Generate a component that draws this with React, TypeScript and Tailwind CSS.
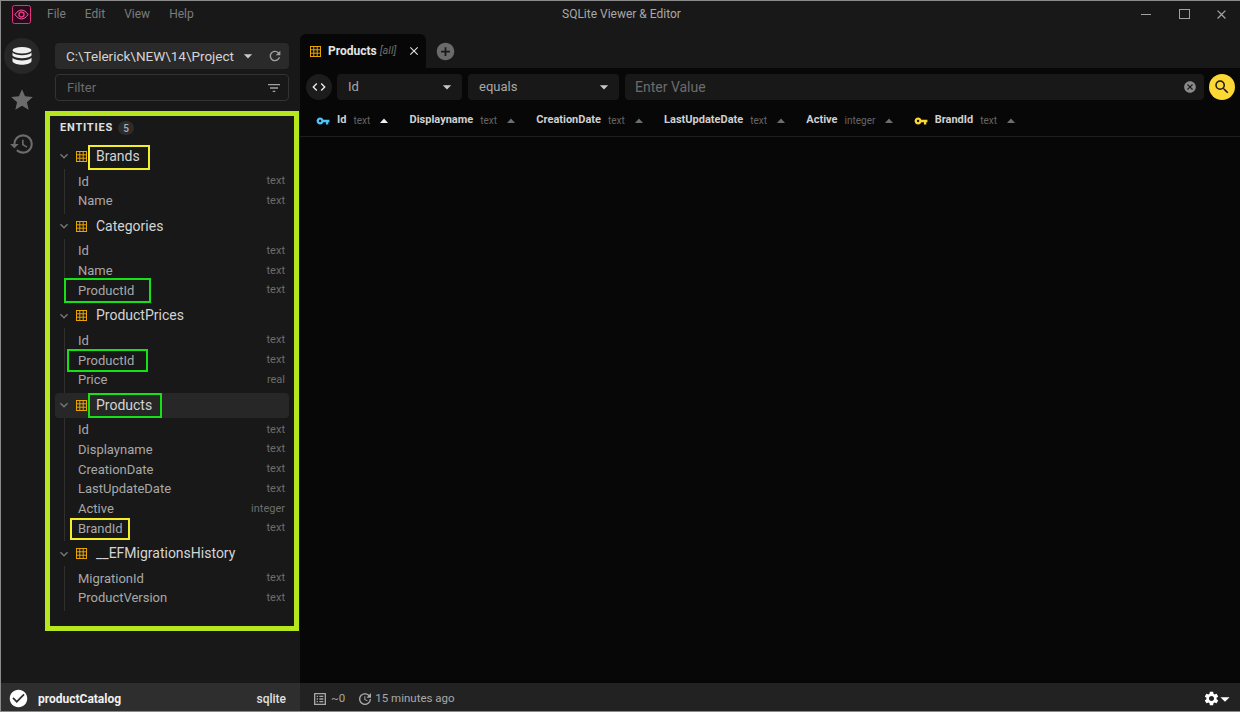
import {
  MdAddCircle,
  MdArrowDropDown,
  MdCancel,
  MdCheckCircle,
  MdClose,
  MdCode,
  MdExpandMore,
  MdFilterList,
  MdHistory,
  MdOutlineListAlt,
  MdRefresh,
  MdSearch,
  MdSettings,
  MdStar,
  MdUpdate,
  MdVpnKey,
} from "react-icons/md";

const font = "font-['Roboto',sans-serif]";

type Col = { name: string; type: string; mark?: "green1" | "green2" | "yellow" };
type Table = { name: string; active?: boolean; mark?: "yellow" | "green"; cols: Col[] };

const tables: Table[] = [
  {
    name: "Brands",
    mark: "yellow",
    cols: [
      { name: "Id", type: "text" },
      { name: "Name", type: "text" },
    ],
  },
  {
    name: "Categories",
    cols: [
      { name: "Id", type: "text" },
      { name: "Name", type: "text" },
      { name: "ProductId", type: "text", mark: "green1" },
    ],
  },
  {
    name: "ProductPrices",
    cols: [
      { name: "Id", type: "text" },
      { name: "ProductId", type: "text", mark: "green2" },
      { name: "Price", type: "real" },
    ],
  },
  {
    name: "Products",
    active: true,
    mark: "green",
    cols: [
      { name: "Id", type: "text" },
      { name: "Displayname", type: "text" },
      { name: "CreationDate", type: "text" },
      { name: "LastUpdateDate", type: "text" },
      { name: "Active", type: "integer" },
      { name: "BrandId", type: "text", mark: "yellow" },
    ],
  },
  {
    name: "__EFMigrationsHistory",
    cols: [
      { name: "MigrationId", type: "text" },
      { name: "ProductVersion", type: "text" },
    ],
  },
];

const headers = [
  { name: "Id", type: "text", key: "text-[#4fc3f7]", sorted: true },
  { name: "Displayname", type: "text" },
  { name: "CreationDate", type: "text" },
  { name: "LastUpdateDate", type: "text" },
  { name: "Active", type: "integer" },
  { name: "BrandId", type: "text", key: "text-[#fdd835]" },
];

function GridIcon({ size = 11 }: { size?: number }) {
  return (
    <svg width={size} height={size} viewBox="0 0 11 11" fill="none" stroke="#e9a400" strokeWidth="1" className="shrink-0">
      <rect x="0.5" y="0.5" width="10" height="10" />
      <path d="M3.8 0.5v10M7.2 0.5v10M0.5 3.8h10M0.5 7.2h10" />
    </svg>
  );
}

function Logo() {
  return (
    <svg width="19" height="19" viewBox="0 0 19 19" fill="none">
      <rect x="0.5" y="0.5" width="18" height="18" rx="2" fill="#2a0a1a" stroke="#e0337f" />
      <path d="M3 9.500c2-3 4-4.400 6.500-4.400s4.500 1.400 6.500 4.400c-2 3-4 4.400-6.500 4.400s-4.500-1.400-6.500-4.400z" stroke="#f06aa8" strokeWidth="1" />
      <circle cx="9.500" cy="9.500" r="2.500" stroke="#f0307f" strokeWidth="1.500" />
    </svg>
  );
}

function DbIcon() {
  return (
    <svg width="20" height="18" viewBox="0 0 20 18" fill="#f0f0f0">
      <ellipse cx="10" cy="3.200" rx="9.500" ry="3.200" />
      <path d="M0.500 5.600C2 7.500 6 8.200 10 8.200S18 7.500 19.500 5.600V8.600C18 10.500 14 11.200 10 11.200S2 10.500 0.500 8.600z" />
      <path d="M0.500 10.800C2 12.700 6 13.400 10 13.400S18 12.700 19.500 10.800V14.600C18 16.900 14 17.800 10 17.800S2 16.900 0.500 14.600z" />
    </svg>
  );
}

function SortCaret({ on }: { on?: boolean }) {
  return (
    <svg width="8" height="5" viewBox="0 0 8 5" className="shrink-0">
      <path d="M0 5L4 0.500L8 5z" fill={on ? "#f0f0f0" : "#6e6e6e"} />
    </svg>
  );
}

function TableGroup({ table }: { table: Table }) {
  return (
    <div>
      <div className={`relative flex h-[25px] items-center rounded ${table.active ? "bg-[#272727]" : ""}`}>
        <MdExpandMore className="ml-[1px] shrink-0 text-[#777777]" size={16} />
        <span className="ml-[4px] flex">
          <GridIcon />
        </span>
        <span className="ml-[9px] text-[14px] text-[#d4d4d4]">{table.name}</span>
        {table.mark === "yellow" && (
          <span className="absolute top-[1px] left-[33px] h-[25px] w-[62px] border-2 border-[#f2ee2a]" />
        )}
        {table.mark === "green" && (
          <span className="absolute top-0 left-[33px] h-[25px] w-[74px] border-2 border-[#16e016]" />
        )}
      </div>
      <div className="ml-[9px] border-l border-[#303030] py-[2.7px] pl-[13px]">
        {table.cols.map((col) => (
          <div key={col.name} className="relative flex h-[19.7px] items-center justify-between pr-[4px]">
            <span className="text-[13px] text-[#a8a8a8]">{col.name}</span>
            <span className="text-[11px] text-[#6c6c6c]">{col.type}</span>
            {col.mark === "green1" && (
              <span className="absolute top-[-3px] left-[-14px] h-[25px] w-[87px] border-2 border-[#16e016]" />
            )}
            {col.mark === "green2" && (
              <span className="absolute top-[-1px] left-[-11px] h-[23px] w-[81px] border-2 border-[#16e016]" />
            )}
            {col.mark === "yellow" && (
              <span className="absolute top-[-1px] left-[-8px] h-[22px] w-[60px] border-2 border-[#f2ee2a]" />
            )}
          </div>
        ))}
      </div>
    </div>
  );
}

export default function App() {
  return (
    <div className={`${font} flex h-[712px] w-[1240px] flex-col overflow-hidden border border-r-0 border-[#8a8a8a] bg-[#181818]`}>
      {/* title bar */}
      <div className="relative flex h-[27px] shrink-0 items-center pb-[1px]">
        <div className="ml-[11px] flex">
          <Logo />
        </div>
        <nav className="ml-[16px] flex gap-[19px] text-[12px] text-[#7c7c7c]">
          <span>File</span>
          <span>Edit</span>
          <span>View</span>
          <span>Help</span>
        </nav>
        <span className="absolute left-[561px] text-[12px] text-[#a8a8a8]">SQLite Viewer &amp; Editor</span>
        <div className="ml-auto flex items-center pr-[11px] text-[#a0a0a0]">
          <span className="h-[1px] w-[10px] bg-[#a0a0a0]" />
          <span className="ml-[28px] h-[10px] w-[11px] border border-[#a0a0a0]" />
          <MdClose size={15} className="ml-[24px]" />
        </div>
      </div>

      <div className="flex min-h-0 flex-1">
        {/* icon rail */}
        <div className="flex w-[42px] shrink-0 flex-col items-center pt-[10px]">
          <div className="flex h-[36px] w-[36px] shrink-0 items-center justify-center rounded-full bg-[#272727]">
            <DbIcon />
          </div>
          <MdStar size={26} className="mt-[13px] text-[#6c6c6c]" />
          <MdHistory size={26} className="mt-[18px] text-[#6c6c6c]" />
        </div>

        {/* sidebar */}
        <div className="ml-[2px] mr-[1px] flex w-[254px] shrink-0 flex-col">
          <div className="ml-[10px] mr-[10px] mt-[15px] flex h-[26px] items-center rounded bg-[#2a2a2a] pl-[11px] pr-[6px]">
            <span className="whitespace-nowrap text-[13.500px] text-[#d4d4d4]">C:\Telerick\NEW\14\Project</span>
            <MdArrowDropDown size={20} className="ml-auto text-[#c8c8c8]" />
            <MdRefresh size={16} className="ml-[9px] text-[#a0a0a0]" />
          </div>
          <div className="ml-[10px] mr-[10px] mt-[5px] flex h-[27px] items-center rounded border border-[#333333] pl-[11px] pr-[6px]">
            <span className="text-[13px] text-[#6c6c6c]">Filter</span>
            <MdFilterList size={16} className="ml-auto text-[#a0a0a0]" />
          </div>

          <div className="mt-[10px] h-[520px] border-[5px] border-[#b6e61e] px-[5px]">
            <div className="flex h-[22px] items-center pl-[5px] pt-[2px]">
              <span className="text-[11px] font-bold tracking-[0.8px] text-[#e0e0e0]">ENTITIES</span>
              <span className="ml-[5px] flex h-[14px] w-[16px] items-center justify-center rounded-full bg-[#2c2c2c] text-[10px] font-medium text-[#b0b0b0]">
                5
              </span>
            </div>
            <div className="mt-[5.900px]">
              {tables.map((table) => (
                <TableGroup key={table.name} table={table} />
              ))}
            </div>
          </div>
        </div>

        {/* main */}
        <div className="flex min-w-0 flex-1 flex-col">
          <div className="flex h-[40px] shrink-0 items-end">
            <div className="flex h-[34px] w-[126px] items-center rounded-t-md bg-[#070707] pl-[10px]">
              <GridIcon />
              <span className="ml-[7px] text-[12px] font-bold text-[#e4e4e4]">Products</span>
              <span className="ml-[3px] text-[11px] italic text-[#6c6c6c]">[all]</span>
              <MdClose size={14} className="ml-[11px] text-[#e0e0e0]" />
            </div>
            <MdAddCircle size={21} className="mb-[6px] ml-[9px] text-[#6a6a6a]" />
          </div>

          <div className="flex flex-1 flex-col bg-[#070707]">
            <div className="flex h-[38px] shrink-0 items-center pl-[6px] pr-[5px]">
              <div className="flex h-[26px] w-[26px] shrink-0 items-center justify-center rounded-full bg-[#1c1c1c] text-[#f0f0f0]">
                <MdCode size={16} />
              </div>
              <div className="ml-[5px] flex h-[26px] w-[125px] items-center justify-between rounded bg-[#181818] pl-[11px] pr-[5px]">
                <span className="text-[13px] text-[#a8a8a8]">Id</span>
                <MdArrowDropDown size={20} className="text-[#c8c8c8]" />
              </div>
              <div className="ml-[6px] flex h-[26px] w-[151px] items-center justify-between rounded bg-[#181818] pl-[11px] pr-[5px]">
                <span className="text-[13px] text-[#a8a8a8]">equals</span>
                <MdArrowDropDown size={20} className="text-[#c8c8c8]" />
              </div>
              <div className="ml-[6px] flex h-[26px] flex-1 items-center justify-between rounded bg-[#181818] pl-[10px] pr-[7px]">
                <span className="text-[14px] text-[#6c6c6c]">Enter Value</span>
                <MdCancel size={14} className="text-[#8a8a8a]" />
              </div>
              <div className="ml-[5px] flex h-[26px] w-[26px] shrink-0 items-center justify-center rounded-full bg-[#fdd835] text-[#1a1a1a]">
                <MdSearch size={18} />
              </div>
            </div>

            <div className="flex h-[31px] shrink-0 items-center border-b border-[#1e1e1e] pb-[1px] pl-[17px]">
              {headers.map((h) => (
                <div key={h.name} className="mr-[21.300px] flex items-center">
                  {h.key && <MdVpnKey size={14} className={`-ml-[1px] mr-[7px] ${h.key}`} />}
                  <span className="text-[11px] font-bold text-[#d0d0d0]">{h.name}</span>
                  <span className="ml-[7px] text-[10px] text-[#666666]">{h.type}</span>
                  <span className="ml-[10px] flex">
                    <SortCaret on={h.sorted} />
                  </span>
                </div>
              ))}
            </div>
            <div className="flex-1" />
          </div>
        </div>
      </div>

      {/* status bar */}
      <div className="flex h-[28px] shrink-0 items-center">
        <div className="flex h-full w-[299px] shrink-0 items-center bg-[#2e2e2e] pl-[7px] pr-[14px] pt-[3px]">
          <MdCheckCircle size={21} className="text-white" />
          <span className="ml-[9px] text-[12px] font-bold text-[#f0f0f0]">productCatalog</span>
          <span className="ml-auto text-[12px] font-medium text-[#e0e0e0]">sqlite</span>
        </div>
        <div className="flex h-full flex-1 items-center bg-[#222222] pl-[12px] pr-[4px] pt-[3px] text-[11.500px] text-[#a8a8a8]">
          <MdOutlineListAlt size={16} />
          <span className="ml-[3px]">~0</span>
          <MdUpdate size={16} className="ml-[12px]" />
          <span className="ml-[2px]">15 minutes ago</span>
          <MdSettings size={17} className="ml-auto text-white" />
          <MdArrowDropDown size={22} className="-ml-[6px] text-white" />
        </div>
      </div>
    </div>
  );
}
